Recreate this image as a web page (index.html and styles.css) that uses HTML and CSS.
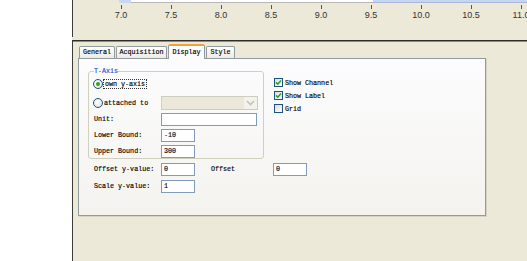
FILE: index.html
```html
<!DOCTYPE html>
<html lang="en">
<head>
    <meta charset="UTF-8">
    <title>Channel Properties - Display</title>
    <link rel="stylesheet" href="styles.css">
</head>
<body>

<div class="app">
    <div class="sidebar"></div>

    <div class="main">
        <!-- time axis of the plot above -->
        <div class="axis-pane">
            <div class="plot-edge">
                <div class="plot-white"><div class="plot-mark"></div></div>
                <div class="plot-blue"></div>
            </div>
            <div class="ticks">
                <div class="tick"><span class="tick-line"></span><span class="tick-label">7.0</span></div>
                <div class="tick"><span class="tick-line"></span><span class="tick-label">7.5</span></div>
                <div class="tick"><span class="tick-line"></span><span class="tick-label">8.0</span></div>
                <div class="tick"><span class="tick-line"></span><span class="tick-label">8.5</span></div>
                <div class="tick"><span class="tick-line"></span><span class="tick-label">9.0</span></div>
                <div class="tick"><span class="tick-line"></span><span class="tick-label">9.5</span></div>
                <div class="tick"><span class="tick-line"></span><span class="tick-label">10.0</span></div>
                <div class="tick"><span class="tick-line"></span><span class="tick-label">10.5</span></div>
                <div class="tick"><span class="tick-line"></span><span class="tick-label">11.0</span></div>
            </div>
        </div>

        <div class="splitter"></div>

        <div class="props-pane">
            <div class="tabs">
                <div class="tab tab-general">General</div>
                <div class="tab tab-acquisition">Acquisition</div>
                <div class="tab tab-display active">Display</div>
                <div class="tab tab-style">Style</div>
            </div>

            <div class="tab-panel">
                <div class="top-row">
                    <fieldset class="group">
                        <legend>T-Axis</legend>

                        <div class="row row-first">
                            <span class="radio checked"></span>
                            <span class="focus-label">own y-axis</span>
                        </div>
                        <div class="row row-second">
                            <span class="radio"></span>
                            <span class="radio-text">attached to</span>
                            <div class="combo disabled">
                                <span class="combo-button">
                                    <svg width="9" height="6" viewBox="0 0 9 6"><path d="M1 1 L4.5 4.5 L8 1" fill="none" stroke="#c4c2b8" stroke-width="1.6"/></svg>
                                </span>
                            </div>
                        </div>
                        <div class="row">
                            <span class="field-label">Unit:</span>
                            <input class="field wide" type="text" value="">
                        </div>
                        <div class="row">
                            <span class="field-label">Lower Bound:</span>
                            <input class="field" type="text" value="-10">
                        </div>
                        <div class="row">
                            <span class="field-label">Upper Bound:</span>
                            <input class="field" type="text" value="300">
                        </div>
                    </fieldset>

                    <div class="checks">
                        <div class="check-row">
                            <span class="checkbox checked">
                                <svg width="7" height="7" viewBox="0 0 7 7"><path d="M1 3.4 L2.8 5.2 L6 1.6" fill="none" stroke="#21a121" stroke-width="1.5"/></svg>
                            </span>
                            <span>Show Channel</span>
                        </div>
                        <div class="check-row">
                            <span class="checkbox checked">
                                <svg width="7" height="7" viewBox="0 0 7 7"><path d="M1 3.4 L2.8 5.2 L6 1.6" fill="none" stroke="#21a121" stroke-width="1.5"/></svg>
                            </span>
                            <span>Show Label</span>
                        </div>
                        <div class="check-row">
                            <span class="checkbox"></span>
                            <span>Grid</span>
                        </div>
                    </div>
                </div>

                <div class="row outer-row offset-row">
                    <span class="field-label">Offset y-value:</span>
                    <input class="field" type="text" value="0">
                    <span class="offset-label">Offset</span>
                    <input class="field" type="text" value="0">
                </div>
                <div class="row outer-row scale-row">
                    <span class="field-label">Scale y-value:</span>
                    <input class="field" type="text" value="1">
                </div>
            </div>
        </div>
    </div>
</div>

</body>
</html>
```

FILE: styles.css
```css
body {
    margin: 0;
    width: 527px;
    height: 261px;
    overflow: hidden;
    background: white;
    font-family: 'Liberation Mono', monospace;
    font-size: 6.7px;
    color: #000;
    -webkit-text-stroke: 0.15px #000;
}

.app {
    display: flex;
    height: 261px;
}

.sidebar {
    width: 72px;
    flex-shrink: 0;
    background: white;
}

.main {
    flex: 1;
    display: flex;
    flex-direction: column;
    min-width: 0;
    background: #ece9d8;
}

/* axis pane */

.axis-pane {
    height: 37px;
    border-left: 1px solid #3c3c3c;
    overflow: hidden;
}

.plot-edge {
    display: flex;
    height: 3px;
    margin-left: 46px;
}

.plot-white {
    width: 254px;
    background: white;
    border-bottom: 1px solid #b8b8b8;
}

.plot-mark {
    width: 12px;
    height: 3px;
    background: #c9d6f0;
}

.plot-blue {
    flex: 1;
    background: #c8d5f1;
    border-bottom: 1px solid #a9b8d8;
}

.ticks {
    display: flex;
    margin-left: 23px;
    margin-top: 2px;
}

.tick {
    width: 50px;
    flex-shrink: 0;
    display: flex;
    flex-direction: column;
    align-items: center;
}

.tick-line {
    width: 1px;
    height: 4px;
    background: #555;
}

.tick-label {
    font-family: 'Liberation Sans', Arial, sans-serif;
    font-size: 9px;
    line-height: 12px;
    color: #333;
    -webkit-text-stroke: 0;
}

.splitter {
    height: 3px;
}

/* properties pane */

.props-pane {
    flex: 1;
    border-top: 1px solid #2e2e2e;
    border-left: 1px solid #3c3c3c;
    box-shadow: inset 0 1px #8a8a8a;
    padding: 3px 0 0 5px;
}

.tabs {
    display: flex;
    align-items: flex-end;
    gap: 1px;
    height: 15px;
    margin-left: 1px;
    margin-bottom: -1px;
    position: relative;
    z-index: 1;
}

.tab {
    height: 11px;
    line-height: 11px;
    margin-bottom: 1px;
    text-align: center;
    border: 1px solid #919b9c;
    border-bottom: none;
    border-radius: 2px 2px 0 0;
    background: linear-gradient(#ffffff, #ecebe6);
}

.tab-general { width: 34px; }
.tab-acquisition { width: 49px; }
.tab-display { width: 35px; }
.tab-style { width: 27px; }

.tab.active {
    height: 13px;
    line-height: 12px;
    margin-bottom: 0;
    border-top: 2px solid #f2a13a;
    background: #fcfcfe;
}

.tab-panel {
    width: 397px;
    height: 148px;
    border: 1px solid #919b9c;
    background: linear-gradient(#fcfcfe, #f4f3ee);
    padding: 8px 0 0 9px;
    box-sizing: content-box;
    box-shadow: 1px 1px 0 #d6d3c4;
}

.top-row {
    display: flex;
    align-items: flex-start;
}

.group {
    width: 164px;
    margin: 0;
    padding: 2px 5px 0 5px;
    border: 1px solid #d0d0bf;
    border-radius: 3px;
}

.group legend {
    padding: 0;
    line-height: 8px;
    color: #1f4fcf;
    -webkit-text-stroke: 0.15px #1f4fcf;
}

.row {
    display: flex;
    align-items: center;
    height: 14px;
    margin-bottom: 2px;
}

.row:last-child {
    margin-bottom: 0;
}

.row-first {
    margin-bottom: 5px;
}

.row-second {
    margin-bottom: 2px;
}

.field-label {
    width: 67px;
    flex-shrink: 0;
}

.radio {
    width: 10px;
    height: 10px;
    box-sizing: border-box;
    margin-left: -1px;
    border: 1px solid #1c5180;
    border-radius: 50%;
    background: radial-gradient(circle at 40% 40%, #ffffff, #dcdcd4);
    display: flex;
    align-items: center;
    justify-content: center;
}

.radio.checked::after {
    content: '';
    width: 4px;
    height: 4px;
    border-radius: 50%;
    background: #27a827;
}

.focus-label {
    margin-left: 1px;
    padding: 0 1px;
    line-height: 8px;
    outline: 1px dotted #333;
}

.radio-text {
    width: 57px;
    margin-left: 1px;
}

.combo {
    width: 97px;
    height: 14px;
    box-sizing: border-box;
    border: 1px solid #cfcdbf;
    background: #ebe8d9;
    display: flex;
    justify-content: flex-end;
}

.combo-button {
    width: 13px;
    display: flex;
    align-items: center;
    justify-content: center;
    background: #f3f2ec;
}

.field {
    width: 34px;
    height: 13px;
    box-sizing: border-box;
    margin: 0;
    padding: 0 2px;
    border: 1px solid #7f9db9;
    background: white;
    font-family: 'Liberation Mono', monospace;
    font-size: 6.7px;
    color: #000;
    -webkit-text-stroke: 0.15px #000;
    outline: none;
}

.field.wide {
    width: 96px;
}

.checks {
    margin-left: 10px;
    margin-top: 9px;
}

.check-row {
    display: flex;
    align-items: center;
    height: 13px;
    gap: 2px;
}

.checkbox {
    width: 9px;
    height: 9px;
    box-sizing: border-box;
    border: 1px solid #1c5180;
    background: linear-gradient(135deg, #dcdcd7, #ffffff);
    display: flex;
    align-items: center;
    justify-content: center;
}

.outer-row {
    padding-left: 6px;
}

.offset-row {
    margin-top: 3px;
    margin-bottom: 3px;
}

.offset-label {
    width: 62px;
    margin-left: 16px;
}
```
